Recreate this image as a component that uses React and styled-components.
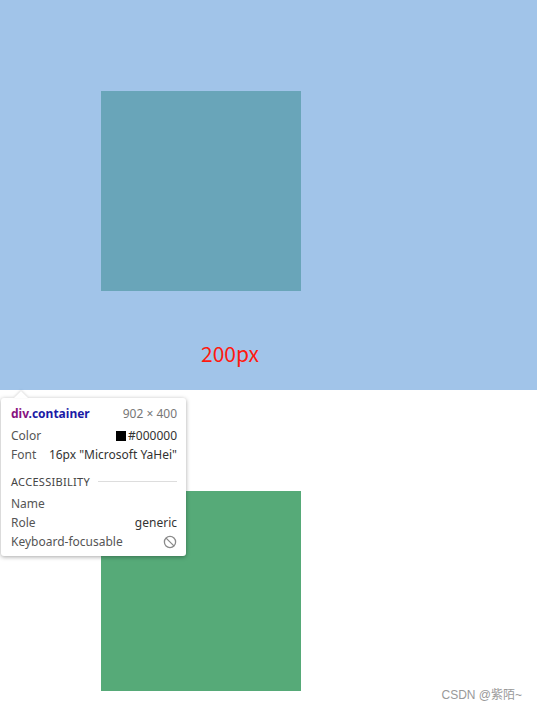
import React from "react";
import styled, { createGlobalStyle } from "styled-components";

const GlobalStyle = createGlobalStyle`
    body {
        margin: 0;
        font-family: "Noto Sans", "Noto Sans CJK SC", sans-serif;
        background: #fff;
    }
`;

function App() {
    return (
        <Page>
            <GlobalStyle />
            <Container>
                <InnerBox />
                <SizeLabel>200px</SizeLabel>
            </Container>
            <GreenBox />

            <Tooltip>
                <HeaderRow>
                    <Selector>
                        <Tag>div</Tag>
                        <ClassName>.container</ClassName>
                    </Selector>
                    <Muted>902 × 400</Muted>
                </HeaderRow>
                <Row>
                    <Label>Color</Label>
                    <Value>
                        <Swatch />
                        #000000
                    </Value>
                </Row>
                <Row>
                    <Label>Font</Label>
                    <Value>16px "Microsoft YaHei"</Value>
                </Row>
                <Section>
                    <SectionTitle>ACCESSIBILITY</SectionTitle>
                    <Rule />
                </Section>
                <Row>
                    <Label>Name</Label>
                </Row>
                <Row>
                    <Label>Role</Label>
                    <Value>generic</Value>
                </Row>
                <Row>
                    <Label>Keyboard-focusable</Label>
                    <Value>
                        <svg width="14" height="14" viewBox="0 0 14 14">
                            <circle cx="7" cy="7" r="5.6" fill="none" stroke="#8a8a8a" strokeWidth="1.3" />
                            <line x1="3.1" y1="3.1" x2="10.9" y2="10.9" stroke="#8a8a8a" strokeWidth="1.3" />
                        </svg>
                    </Value>
                </Row>
            </Tooltip>

            <Watermark>CSDN @紫陌~</Watermark>
        </Page>
    );
}

const Page = styled.div`
    position: relative;
    width: 537px;
    height: 710px;
    overflow: hidden;
`;
const Container = styled.div`
    height: 390px;
    box-sizing: border-box;
    padding: 91px 0 0 101px;
    background-color: #a1c4e9;
`;
const InnerBox = styled.div`
    width: 200px;
    height: 200px;
    background-color: #69a5b9;
`;
const SizeLabel = styled.div`
    margin: 49px 0 0 100px;
    font-family: "Noto Sans CJK SC", sans-serif;
    font-size: 21px;
    line-height: 26px;
    color: #ff1a0f;
`;
const GreenBox = styled.div`
    width: 200px;
    height: 200px;
    margin: 101px 0 0 101px;
    background-color: #56aa78;
`;
const Tooltip = styled.div`
    position: absolute;
    left: 1px;
    top: 398px;
    width: 185px;
    box-sizing: border-box;
    padding: 6px 9px 5px 10px;
    background: #fff;
    border-radius: 3px;
    box-shadow: 0 1px 4px rgba(0, 0, 0, 0.35);
    font-size: 12px;
    color: #333;

    &::before {
        content: "";
        position: absolute;
        left: 13px;
        top: -7px;
        border-left: 7px solid transparent;
        border-right: 7px solid transparent;
        border-bottom: 7px solid #fff;
        filter: drop-shadow(0 -1px 1px rgba(0, 0, 0, 0.15));
    }
`;
const Row = styled.div`
    display: flex;
    justify-content: space-between;
    align-items: center;
    height: 19px;
`;
const HeaderRow = styled(Row)`
    margin-bottom: 3px;
`;
const Selector = styled.span`
    font-weight: 700;
`;
const Tag = styled.span`
    color: #881280;
`;
const ClassName = styled.span`
    color: #1a1aa6;
`;
const Muted = styled.span`
    color: #777;
`;
const Label = styled.span`
    color: #555;
    white-space: nowrap;
`;
const Value = styled.span`
    display: flex;
    align-items: center;
    gap: 2px;
    color: #333;
    white-space: nowrap;
`;
const Swatch = styled.span`
    width: 10px;
    height: 10px;
    background: #000;
`;
const Section = styled.div`
    display: flex;
    align-items: center;
    gap: 8px;
    height: 19px;
    margin: 8px 0 3px;
`;
const SectionTitle = styled.span`
    font-size: 11px;
    letter-spacing: 0.3px;
    color: #444;
`;
const Rule = styled.div`
    flex: 1;
    height: 1px;
    background: #ddd;
`;
const Watermark = styled.div`
    position: absolute;
    right: 15px;
    bottom: 8px;
    font-family: "Liberation Sans", "Noto Sans CJK SC", sans-serif;
    font-size: 12px;
    color: #999;
`;

export default App;
